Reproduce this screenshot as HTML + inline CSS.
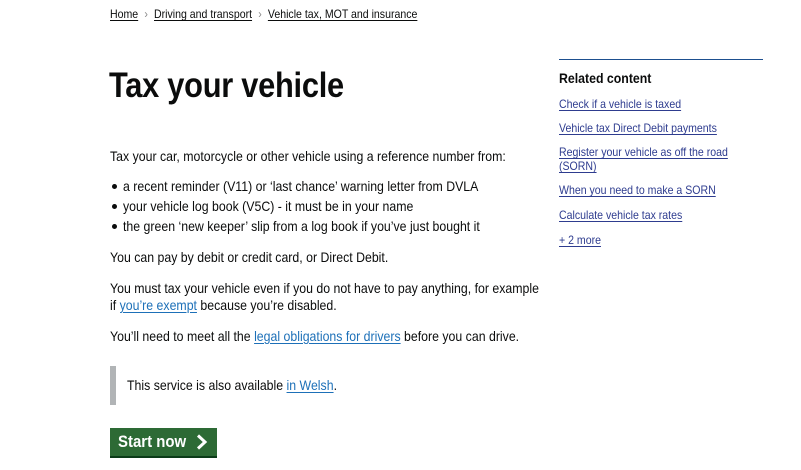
<!DOCTYPE html>
<html><head><meta charset="utf-8"><style>
body{margin:0;width:801px;height:470px;background:#fff;font-family:"Liberation Sans",Arial,sans-serif;color:#0b0c0c;position:relative;overflow:hidden}
.a{position:absolute;white-space:nowrap;transform-origin:left center}
.t{font-size:14px;transform:scaleX(.88);line-height:18px}
a{color:#1d70b8;text-decoration:underline;text-underline-offset:2px}
.bc{font-size:12px;transform:scaleX(.88);color:#0b0c0c}
.bc a{color:#0b0c0c}
.sb{font-size:12px;transform:scaleX(.88);line-height:14px}
.sb a{color:#2e3c8f}
.dot{position:absolute;width:5px;height:5px;border-radius:50%;background:#0b0c0c}
</style></head><body>
<div class="a bc" style="left:110px;top:7px"><a>Home</a><span style="color:#888;margin:0 7px">&#8250;</span><a>Driving and transport</a><span style="color:#888;margin:0 7px">&#8250;</span><a>Vehicle tax, MOT and insurance</a></div>
<div class="a" style="left:109px;top:66px;font-size:35px;font-weight:bold;transform:scaleX(.88);letter-spacing:-0.3px">Tax your vehicle</div>
<div class="a t" style="left:110px;top:147px">Tax your car, motorcycle or other vehicle using a reference number from:</div>
<div class="dot" style="left:112px;top:184px"></div>
<div class="a t" style="left:123px;top:177px">a recent reminder (V11) or ‘last chance’ warning letter from DVLA</div>
<div class="dot" style="left:112px;top:204px"></div>
<div class="a t" style="left:123px;top:197px">your vehicle log book (V5C) - it must be in your name</div>
<div class="dot" style="left:112px;top:224px"></div>
<div class="a t" style="left:123px;top:217px">the green ‘new keeper’ slip from a log book if you’ve just bought it</div>
<div class="a t" style="left:110px;top:248px">You can pay by debit or credit card, or Direct Debit.</div>
<div class="a t" style="left:110px;top:279px">You must tax your vehicle even if you do not have to pay anything, for example</div>
<div class="a t" style="left:110px;top:296px">if <a>you’re exempt</a> because you’re disabled.</div>
<div class="a t" style="left:110px;top:327px">You’ll need to meet all the <a>legal obligations for drivers</a> before you can drive.</div>
<div style="position:absolute;left:110px;top:366px;width:6px;height:39px;background:#b1b4b6"></div>
<div class="a t" style="left:127px;top:376px">This service is also available <a>in Welsh</a>.</div>
<div style="position:absolute;left:110px;top:428px;width:107px;height:28px;background:#2d6a35;box-shadow:0 2px 0 #0b3b18"></div>
<div class="a" style="left:118px;top:432px;font-size:17px;font-weight:bold;color:#fff;transform:scaleX(.88)">Start now</div>
<svg style="position:absolute;left:196px;top:434px" width="12" height="16" viewBox="0 0 12 16"><path d="M2 1.5 L9 8 L2 14.5" stroke="#fff" stroke-width="3" fill="none"/></svg>
<div style="position:absolute;left:559px;top:59px;width:204px;height:1px;background:#1d4f8f"></div>
<div class="a" style="left:559px;top:70px;font-size:14px;font-weight:bold;transform:scaleX(.88)">Related content</div>
<div class="a sb" style="left:559px;top:97px"><a>Check if a vehicle is taxed</a></div>
<div class="a sb" style="left:559px;top:121px"><a>Vehicle tax Direct Debit payments</a></div>
<div class="a sb" style="left:559px;top:145px"><a>Register your vehicle as off the road</a></div>
<div class="a sb" style="left:559px;top:159px"><a>(SORN)</a></div>
<div class="a sb" style="left:559px;top:183px"><a>When you need to make a SORN</a></div>
<div class="a sb" style="left:559px;top:208px"><a>Calculate vehicle tax rates</a></div>
<div class="a sb" style="left:559px;top:233px"><a>+ 2 more</a></div>
</body></html>
